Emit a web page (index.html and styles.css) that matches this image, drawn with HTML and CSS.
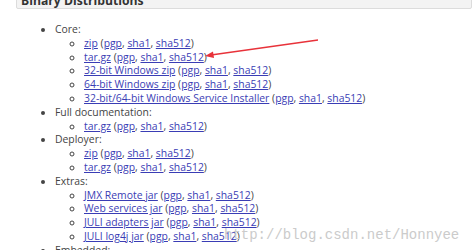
FILE: index.html
```html
<!DOCTYPE html>
<html lang="en">
<head>
    <meta charset="UTF-8">
    <title>Binary Distributions</title>
    <link rel="stylesheet" href="styles.css">
</head>
<body>
    <div class="page">
        <h3 class="section-title">Binary Distributions</h3>
        <ul class="dist-list">
            <li>Core:
                <ul>
                    <li><a href="#">zip</a> (<a href="#">pgp</a>, <a href="#">sha1</a>, <a href="#">sha512</a>)</li>
                    <li><a href="#">tar.gz</a> (<a href="#">pgp</a>, <a href="#">sha1</a>, <a href="#">sha512</a>)</li>
                    <li><a href="#">32-bit Windows zip</a> (<a href="#">pgp</a>, <a href="#">sha1</a>, <a href="#">sha512</a>)</li>
                    <li><a href="#">64-bit Windows zip</a> (<a href="#">pgp</a>, <a href="#">sha1</a>, <a href="#">sha512</a>)</li>
                    <li><a href="#">32-bit/64-bit Windows Service Installer</a> (<a href="#">pgp</a>, <a href="#">sha1</a>, <a href="#">sha512</a>)</li>
                </ul>
            </li>
            <li>Full documentation:
                <ul>
                    <li><a href="#">tar.gz</a> (<a href="#">pgp</a>, <a href="#">sha1</a>, <a href="#">sha512</a>)</li>
                </ul>
            </li>
            <li>Deployer:
                <ul>
                    <li><a href="#">zip</a> (<a href="#">pgp</a>, <a href="#">sha1</a>, <a href="#">sha512</a>)</li>
                    <li><a href="#">tar.gz</a> (<a href="#">pgp</a>, <a href="#">sha1</a>, <a href="#">sha512</a>)</li>
                </ul>
            </li>
            <li>Extras:
                <ul>
                    <li><a href="#">JMX Remote jar</a> (<a href="#">pgp</a>, <a href="#">sha1</a>, <a href="#">sha512</a>)</li>
                    <li><a href="#">Web services jar</a> (<a href="#">pgp</a>, <a href="#">sha1</a>, <a href="#">sha512</a>)</li>
                    <li><a href="#">JULI adapters jar</a> (<a href="#">pgp</a>, <a href="#">sha1</a>, <a href="#">sha512</a>)</li>
                    <li><a href="#">JULI log4j jar</a> (<a href="#">pgp</a>, <a href="#">sha1</a>, <a href="#">sha512</a>)</li>
                </ul>
            </li>
            <li>Embedded:</li>
        </ul>

        <!-- annotation arrow pointing at tar.gz sha512 -->
        <svg class="arrow" width="120" height="24" viewBox="0 0 120 24">
            <line x1="115" y1="2" x2="8" y2="17" stroke="#e8323a" stroke-width="1.3"/>
            <polygon points="2,18 10,13.5 11,20" fill="#e8323a"/>
        </svg>

        <div class="watermark">http://blog.csdn.net/Honnyee</div>
    </div>
</body>
</html>
```
FILE: styles.css
```css
body {
    margin: 0;
    background-color: #fff;
    font-family: "Open Sans", Arial, sans-serif;
    color: #444;
    overflow: hidden;
}
.page {
    position: relative;
    display: flow-root;
    height: 250px;
}
.section-title {
    margin: -8px 2px 0 16px;
    padding: 0 4px;
    height: 15px;
    line-height: 15px;
    font-size: 12.2px;
    font-weight: bold;
    color: #333;
    background-color: #f3f3f3;
    border: 1px solid #dcdcdc;
    border-radius: 2px;
}
.dist-list {
    list-style: disc;
    margin: 14px 0 0 0;
    padding-left: 55px;
    font-size: 10.4px;
    line-height: 13.8px;
}
.dist-list ul {
    list-style: circle;
    margin: 0;
    padding-left: 29px;
}
.dist-list a {
    color: #3a3db5;
    text-decoration: underline;
}
.arrow {
    position: absolute;
    left: 203px;
    top: 38px;
}
.watermark {
    position: absolute;
    left: 224px;
    top: 227px;
    font-family: "Liberation Mono", "Courier New", monospace;
    font-size: 14px;
    color: #cbcbcb;
}
```
